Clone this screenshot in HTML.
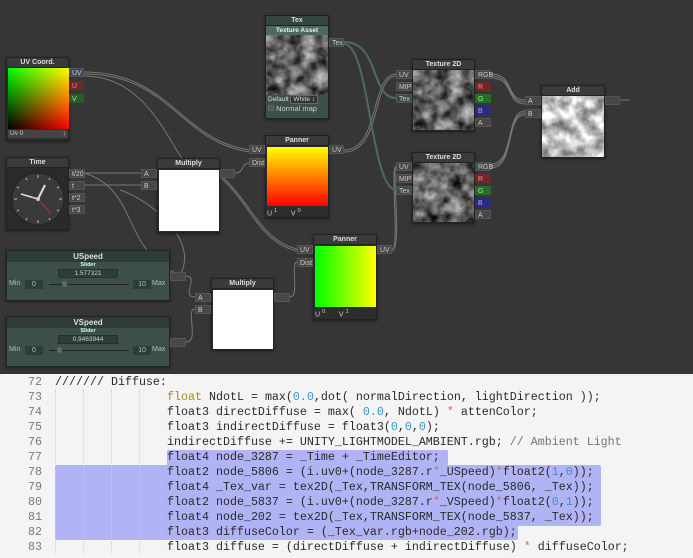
<!DOCTYPE html>
<html><head><meta charset="utf-8"><style>
*{margin:0;padding:0;box-sizing:border-box}
body{width:693px;height:558px;overflow:hidden;background:#353535;font-family:"Liberation Sans",sans-serif;position:relative}
.g{position:absolute;left:0;top:0;width:693px;height:374px;background:#363636;overflow:hidden}
.n{position:absolute;background:#2d2d2d;border:1px solid #222;box-shadow:0 1px 3px rgba(0,0,0,.5)}
.h{height:10px;background:#3a3a3a;color:#ddd;font-size:7px;font-weight:bold;text-align:center;line-height:10px;border-bottom:1px solid #222}
.p{position:absolute;height:9px;font-size:7px;line-height:9px;color:#ccc;background:#474747;border:1px solid #555;padding-left:2px}
.w{position:absolute;background:#fff}
.code{position:absolute;left:0;top:374px;width:693px;height:184px;background:#f4f4f4;font-family:"Liberation Mono",monospace;font-size:11.67px;color:#2a2a2a}
.l{position:absolute;left:0;height:15px;line-height:15px;white-space:pre;width:693px}
.ln{position:absolute;left:50px;width:42px;text-align:right;color:#7a7a7a;transform:translateX(-50px)}
.c{position:absolute;left:167px}
.sel{position:absolute;background:#b0b4f4;border-radius:2px}
.k{color:#a98a20}.nu{color:#3a96c8}.cm{color:#6f7a70}.op{color:#c87050}
.guide{position:absolute;top:15px;width:0;border-left:1px dotted #ccc;height:165px}
</style></head><body>
<div class="g">
<svg width="693" height="374" style="position:absolute;left:0;top:0">
<defs>
<filter id="nz" x="0" y="0" width="100%" height="100%" color-interpolation-filters="sRGB"><feTurbulence type="fractalNoise" baseFrequency="0.08" numOctaves="3" seed="4"/><feColorMatrix type="matrix" values="1 0 0 0 -0.1  1 0 0 0 -0.1  1 0 0 0 -0.1  0 0 0 0 1"/></filter>
<filter id="nz2" x="0" y="0" width="100%" height="100%" color-interpolation-filters="sRGB"><feTurbulence type="fractalNoise" baseFrequency="0.08" numOctaves="3" seed="9"/><feColorMatrix type="matrix" values="1 0 0 0 -0.1  1 0 0 0 -0.1  1 0 0 0 -0.1  0 0 0 0 1"/></filter>
<filter id="nz3" x="0" y="0" width="100%" height="100%" color-interpolation-filters="sRGB"><feTurbulence type="fractalNoise" baseFrequency="0.08" numOctaves="3" seed="2"/><feColorMatrix type="matrix" values="1 0 0 0 0.25  1 0 0 0 0.25  1 0 0 0 0.25  0 0 0 0 1"/></filter>
</defs>
<g fill="none" stroke="#777" stroke-width="1">
<path d="M84 72 C170 72 180 140 250 150"/><path d="M84 74 C170 74 180 142 250 152"/><path d="M84 76 C150 76 170 150 190 168"/>
<path d="M84 173 C120 173 120 173 141 173"/>
<path d="M84 185 C110 185 120 185 141 185"/><path d="M84 173 C140 190 120 250 180 275 C200 240 150 200 120 190"/>
<path d="M235 173 C245 173 240 163 250 163"/>
<path d="M220 175 C250 200 260 240 297 249"/><path d="M220 177 C250 203 260 243 297 251"/>
<path d="M186 276 C200 276 180 297 195 297"/>
<path d="M186 342 C200 342 185 309 195 309"/>
<path d="M290 297 C300 297 290 262 297 262"/>
<path d="M344 150 C380 150 370 75 396 74"/><path d="M344 152 C382 152 372 77 396 76"/>
<path d="M392 249 C400 249 390 166 396 166"/><path d="M392 251 C402 251 392 168 396 168"/>
<path d="M491 74 C515 74 505 100 525 100"/><path d="M491 76 C515 76 505 102 525 102"/><path d="M491 78 C515 78 505 104 525 104"/>
<path d="M491 166 C515 166 505 113 525 113"/><path d="M491 168 C515 168 505 115 525 115"/><path d="M491 164 C515 164 505 111 525 111"/>
</g>
<g fill="none" stroke="#4c6b62" stroke-width="2">
<path d="M344 42 C380 42 370 98 396 98"/><path d="M344 44 C370 44 370 188 396 190"/>
</g>
<g fill="none" stroke="#777"><path d="M620 100 L630 100"/></g>
</svg>

<!-- Tex -->
<div class="n" style="left:265px;top:15px;width:64px;height:104px;background:#3d4f49">
<div class="h" style="background:#354540">Tex</div>
<div style="height:9px;background:#4a6a5e;color:#e8f0ec;font-size:6.5px;font-weight:bold;text-align:center;line-height:9px">Texture Asset</div>
<svg width="62" height="60" style="display:block"><rect width="62" height="60" filter="url(#nz)"/></svg>
<div style="font-size:6.5px;color:#ddd;padding-left:2px;line-height:9px">Default <span style="border:1px solid #666;padding:0 2px;background:#333">White ↕</span></div>
<div style="font-size:7.5px;color:#ccc;padding-left:2px;line-height:9px"><span style="display:inline-block;width:6px;height:6px;background:#555;border:1px solid #666"></span> Normal map</div>
</div>
<div class="p" style="left:329px;top:38px;width:15px;background:#3c4a46">Tex</div>

<!-- UV coord -->
<div class="n" style="left:6px;top:57px;width:63px;height:84px">
<div class="h">UV Coord.</div>
<div style="position:absolute;left:1px;top:10px;width:61px;height:61px;background:linear-gradient(to right,#000,#f00)">
<div style="width:100%;height:100%;background:linear-gradient(to top,#000,#0f0);mix-blend-mode:screen"></div></div>
<div style="position:absolute;left:1px;top:72px;width:60px;height:8px;background:#444;color:#ccc;font-size:6.5px;line-height:8px;padding-left:2px">Uv 0<span style="float:right;padding-right:2px">↕</span></div>
</div>
<div class="p" style="left:69px;top:68px;width:15px;background:#3f4a5f">UV</div>
<div class="p" style="left:69px;top:81px;width:15px;background:#6b2a2a;border-color:#6b2a2a;color:#f88">U</div>
<div class="p" style="left:69px;top:94px;width:15px;background:#2c5a2c;border-color:#2c5a2c;color:#8f8">V</div>

<!-- Time -->
<div class="n" style="left:6px;top:157px;width:63px;height:73px">
<div class="h">Time</div>
<svg width="61" height="61" style="display:block"><rect width="61" height="61" fill="#2a2a2a"/><circle cx="31" cy="31" r="26" fill="#3a3a3a" stroke="#222"/>
<g stroke="#bbb" stroke-width="1"><path d="M31 7v3M31 52v3M7 31h3M52 31h3M43 10l-1 2M19 10l1 2M10 19l2 1M10 43l2-1M52 19l-2 1M52 43l-2-1M43 52l-1-2M19 52l1-2"/></g>
<path d="M31 31 L38 17" stroke="#ddd" stroke-width="2"/><path d="M31 31 L14 26" stroke="#ddd" stroke-width="1.5"/><path d="M31 31 L44 46" stroke="#b03040" stroke-width="1"/><circle cx="31" cy="31" r="2" fill="#ccc"/></svg>
</div>
<div class="p" style="left:69px;top:169px;width:16px">t/20</div>
<div class="p" style="left:69px;top:181px;width:16px">t</div>
<div class="p" style="left:69px;top:193px;width:16px">t*2</div>
<div class="p" style="left:69px;top:205px;width:16px">t*3</div>

<!-- Multiply1 -->
<div class="n" style="left:157px;top:158px;width:63px;height:75px"><div class="h">Multiply</div><div class="w" style="left:1px;top:11px;width:60px;height:61px"></div></div>
<div class="p" style="left:141px;top:169px;width:16px">A</div>
<div class="p" style="left:141px;top:181px;width:16px">B</div>
<div class="p" style="left:220px;top:169px;width:15px"></div>

<!-- Panner1 -->
<div class="n" style="left:265px;top:135px;width:64px;height:83px"><div class="h">Panner</div>
<div style="position:absolute;left:1px;top:11px;width:61px;height:59px;background:linear-gradient(#ff0,#f00)"></div>
<div style="position:absolute;left:1px;top:71px;font-size:7px;color:#ccc;line-height:9px">U <sup>1</sup> &nbsp;&nbsp;&nbsp;&nbsp;&nbsp;&nbsp;V <sup>0</sup></div></div>
<div class="p" style="left:249px;top:145px;width:16px">UV</div>
<div class="p" style="left:249px;top:158px;width:16px">Dist</div>
<div class="p" style="left:329px;top:145px;width:15px">UV</div>

<!-- Panner2 -->
<div class="n" style="left:313px;top:234px;width:64px;height:86px"><div class="h">Panner</div>
<div style="position:absolute;left:1px;top:11px;width:61px;height:61px;background:linear-gradient(to right,#0f0,#ff0)"></div>
<div style="position:absolute;left:1px;top:73px;font-size:7px;color:#ccc;line-height:9px">U <sup>0</sup> &nbsp;&nbsp;&nbsp;&nbsp;&nbsp;&nbsp;V <sup>1</sup></div></div>
<div class="p" style="left:297px;top:245px;width:16px">UV</div>
<div class="p" style="left:297px;top:258px;width:16px">Dist</div>
<div class="p" style="left:377px;top:245px;width:15px">UV</div>

<!-- Multiply2 -->
<div class="n" style="left:211px;top:278px;width:63px;height:72px"><div class="h">Multiply</div><div class="w" style="left:1px;top:11px;width:60px;height:59px"></div></div>
<div class="p" style="left:195px;top:293px;width:16px">A</div>
<div class="p" style="left:195px;top:305px;width:16px">B</div>
<div class="p" style="left:274px;top:293px;width:16px"></div>

<!-- USpeed / VSpeed -->
<div class="n" style="left:6px;top:250px;width:164px;height:51px;background:#3c4f49">
<div style="height:11px;background:#2e3b37;color:#ddd;font-size:8px;font-weight:bold;text-align:center;line-height:11px">USpeed</div>
<div style="text-align:center;font-size:5.5px;font-weight:bold;color:#cfe;line-height:7px">Slider</div>
<div style="margin:0 auto;width:60px;height:9px;background:#2f3d39;border:1px solid #26302d;color:#ccc;font-size:6.5px;text-align:center;line-height:8px">1.577321</div>
<div style="position:relative;height:12px;font-size:7px;color:#bbb;line-height:12px"><span style="position:absolute;left:2px">Min</span><span style="position:absolute;left:18px;top:2px;width:18px;height:9px;background:#2f3d39;line-height:9px;text-align:center">0</span><span style="position:absolute;left:42px;top:6px;width:80px;height:1px;background:#222"></span><span style="position:absolute;left:55px;top:3px;width:5px;height:6px;border-radius:3px;background:#666"></span><span style="position:absolute;left:126px;top:2px;width:18px;height:9px;background:#2f3d39;line-height:9px;text-align:center">10</span><span style="position:absolute;left:145px">Max</span></div>
</div>
<div class="p" style="left:170px;top:272px;width:16px"></div>
<div class="n" style="left:6px;top:316px;width:164px;height:51px;background:#3c4f49">
<div style="height:11px;background:#2e3b37;color:#ddd;font-size:8px;font-weight:bold;text-align:center;line-height:11px">VSpeed</div>
<div style="text-align:center;font-size:5.5px;font-weight:bold;color:#cfe;line-height:7px">Slider</div>
<div style="margin:0 auto;width:60px;height:9px;background:#2f3d39;border:1px solid #26302d;color:#ccc;font-size:6.5px;text-align:center;line-height:8px">0.9463944</div>
<div style="position:relative;height:12px;font-size:7px;color:#bbb;line-height:12px"><span style="position:absolute;left:2px">Min</span><span style="position:absolute;left:18px;top:2px;width:18px;height:9px;background:#2f3d39;line-height:9px;text-align:center">0</span><span style="position:absolute;left:42px;top:6px;width:80px;height:1px;background:#222"></span><span style="position:absolute;left:50px;top:3px;width:5px;height:6px;border-radius:3px;background:#666"></span><span style="position:absolute;left:126px;top:2px;width:18px;height:9px;background:#2f3d39;line-height:9px;text-align:center">10</span><span style="position:absolute;left:145px">Max</span></div>
</div>
<div class="p" style="left:170px;top:338px;width:16px"></div>

<!-- Texture2D 1 -->
<div class="n" style="left:412px;top:59px;width:63px;height:72px"><div class="h">Texture 2D</div>
<svg width="61" height="60" style="display:block"><rect width="61" height="60" filter="url(#nz)"/></svg></div>
<div class="p" style="left:396px;top:70px;width:16px">UV</div>
<div class="p" style="left:396px;top:82px;width:16px">MIP</div>
<div class="p" style="left:396px;top:94px;width:16px;background:#3c4a46">Tex</div>
<div class="p" style="left:475px;top:70px;width:16px">RGB</div>
<div class="p" style="left:475px;top:82px;width:16px;background:#6b2a2a;border-color:#6b2a2a;color:#f88">R</div>
<div class="p" style="left:475px;top:94px;width:16px;background:#2c6a2c;border-color:#2c6a2c;color:#8f8">G</div>
<div class="p" style="left:475px;top:106px;width:16px;background:#2c2c7a;border-color:#2c2c7a;color:#aaf">B</div>
<div class="p" style="left:475px;top:118px;width:16px">A</div>

<!-- Texture2D 2 -->
<div class="n" style="left:412px;top:152px;width:63px;height:71px"><div class="h">Texture 2D</div>
<svg width="61" height="59" style="display:block"><rect width="61" height="59" filter="url(#nz2)"/></svg></div>
<div class="p" style="left:396px;top:162px;width:16px">UV</div>
<div class="p" style="left:396px;top:174px;width:16px">MIP</div>
<div class="p" style="left:396px;top:186px;width:16px;background:#3c4a46">Tex</div>
<div class="p" style="left:475px;top:162px;width:16px">RGB</div>
<div class="p" style="left:475px;top:174px;width:16px;background:#6b2a2a;border-color:#6b2a2a;color:#f88">R</div>
<div class="p" style="left:475px;top:186px;width:16px;background:#2c6a2c;border-color:#2c6a2c;color:#8f8">G</div>
<div class="p" style="left:475px;top:198px;width:16px;background:#2c2c7a;border-color:#2c2c7a;color:#aaf">B</div>
<div class="p" style="left:475px;top:210px;width:16px">A</div>

<!-- Add -->
<div class="n" style="left:541px;top:85px;width:64px;height:73px"><div class="h">Add</div>
<svg width="62" height="61" style="display:block"><rect width="62" height="61" filter="url(#nz3)"/></svg></div>
<div class="p" style="left:525px;top:96px;width:16px">A</div>
<div class="p" style="left:525px;top:109px;width:16px">B</div>
<div class="p" style="left:605px;top:96px;width:15px"></div>
</div>

<div class="code">
<div class="sel" style="left:167px;top:76px;width:281px;height:16px"></div>
<div class="sel" style="left:55px;top:91px;width:546px;height:61px"></div>
<div class="sel" style="left:55px;top:151px;width:463px;height:15px"></div>
<div class="guide" style="left:55px"></div><div class="guide" style="left:83px"></div><div class="guide" style="left:111px"></div><div class="guide" style="left:139px"></div>
<div class="l" style="top:1px"><span class="ln">72</span><span style="position:absolute;left:55px">/////// Diffuse:</span></div>
<div class="l" style="top:16px"><span class="ln">73</span><span class="c"><span class="k">float</span> NdotL = max(<span class="nu">0.0</span>,dot( normalDirection, lightDirection ));</span></div>
<div class="l" style="top:31px"><span class="ln">74</span><span class="c">float3 directDiffuse = max( <span class="nu">0.0</span>, NdotL) <span class="op">*</span> attenColor;</span></div>
<div class="l" style="top:46px"><span class="ln">75</span><span class="c">float3 indirectDiffuse = float3(<span class="nu">0</span>,<span class="nu">0</span>,<span class="nu">0</span>);</span></div>
<div class="l" style="top:61px"><span class="ln">76</span><span class="c">indirectDiffuse += UNITY_LIGHTMODEL_AMBIENT.rgb; <span class="cm">// Ambient Light</span></span></div>
<div class="l" style="top:76px"><span class="ln">77</span><span class="c">float4 node_3287 = _Time + _TimeEditor;</span></div>
<div class="l" style="top:91px"><span class="ln">78</span><span class="c">float2 node_5806 = (i.uv0+(node_3287.r<span class="op">*</span>_USpeed)<span class="op">*</span>float2(<span class="nu">1</span>,<span class="nu">0</span>));</span></div>
<div class="l" style="top:106px"><span class="ln">79</span><span class="c">float4 _Tex_var = tex2D(_Tex,TRANSFORM_TEX(node_5806, _Tex));</span></div>
<div class="l" style="top:121px"><span class="ln">80</span><span class="c">float2 node_5837 = (i.uv0+(node_3287.r<span class="op">*</span>_VSpeed)<span class="op">*</span>float2(<span class="nu">0</span>,<span class="nu">1</span>));</span></div>
<div class="l" style="top:136px"><span class="ln">81</span><span class="c">float4 node_202 = tex2D(_Tex,TRANSFORM_TEX(node_5837, _Tex));</span></div>
<div class="l" style="top:151px"><span class="ln">82</span><span class="c">float3 diffuseColor = (_Tex_var.rgb+node_202.rgb);</span></div>
<div class="l" style="top:166px"><span class="ln">83</span><span class="c">float3 diffuse = (directDiffuse + indirectDiffuse) <span class="op">*</span> diffuseColor;</span></div>
</div>
</body></html>
